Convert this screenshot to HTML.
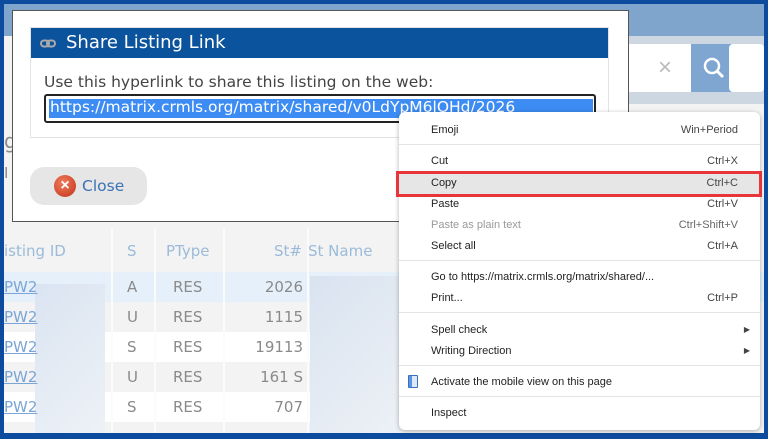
<!DOCTYPE html>
<html><head><style>
*{margin:0;padding:0;box-sizing:border-box}
body{width:768px;height:439px;overflow:hidden;position:relative;background:#0c4b9d;font-family:"Liberation Sans",sans-serif}
.a{position:absolute}
#page{left:4px;top:4px;width:760px;height:429px;background:#f3f3f3;overflow:hidden}
.t{font-size:15px;color:#8a8a8a;font-family:"DejaVu Sans",sans-serif}
.cm{font-family:"Liberation Sans",sans-serif;font-size:11px;color:#222}
.it{position:absolute;left:32px;right:22px;height:20px;line-height:20px}
.it span{position:absolute;right:0;color:#444}
.sep{position:absolute;left:0;right:0;height:1px;background:#e3e3e3}
.dj{font-family:"DejaVu Sans",sans-serif}
</style></head><body>
<div id="page" class="a">
 <div class="a" style="left:0;top:0;width:760px;height:32px;background:#7fa5cc"></div>
 <div class="a" style="left:620px;top:32px;width:140px;height:68px;background:#ccd7e2"></div>
 <div class="a" style="left:620px;top:40px;width:67px;height:48px;background:#fff"></div>
 <div class="a" style="left:654px;top:50px;font-size:24px;color:#bbb">×</div>
 <div class="a" style="left:687px;top:40px;width:47px;height:48px;background:#7ea6d0"></div>
 <svg class="a" style="left:698px;top:52px" width="24" height="24"><circle cx="10" cy="10" r="7" stroke="#fff" stroke-width="2.5" fill="none"/><line x1="15" y1="15" x2="21" y2="21" stroke="#fff" stroke-width="3"/></svg>
 <div class="a" style="left:725px;top:40px;width:35px;height:48px;background:#fff;border-radius:4px"></div>
 <div class="a" style="left:0;top:224px;width:760px;height:44px;background:#f3f3f3"></div>
 <div class="a t" style="left:0;top:238px;color:#9bbbd9">isting ID</div>
 <div class="a t" style="left:123px;top:238px;color:#9bbbd9">S</div>
 <div class="a t" style="left:162px;top:238px;color:#9bbbd9">PType</div>
 <div class="a t" style="left:270px;top:238px;color:#9bbbd9">St#</div>
 <div class="a t" style="left:304px;top:238px;color:#9bbbd9">St Name</div>
 <div class="a" style="left:0;top:268px;width:760px;height:30px;background:#e6f0fb"></div>
 <div class="a" style="left:0;top:328px;width:310px;height:30px;background:#fff"></div>
 <div class="a" style="left:0;top:388px;width:310px;height:30px;background:#fff"></div>
 <div class="a" style="left:107px;top:224px;width:2px;height:210px;background:#fbfbfb"></div>
 <div class="a" style="left:150px;top:224px;width:2px;height:210px;background:#fbfbfb"></div>
 <div class="a" style="left:219px;top:224px;width:2px;height:210px;background:#fbfbfb"></div>
 <div class="a" style="left:303px;top:224px;width:2px;height:210px;background:#fbfbfb"></div>
 <div class="a" style="left:31px;top:280px;width:70px;height:155px;background:linear-gradient(135deg,#dae4f1,#eef2f7)"></div>
 <div class="a" style="left:306px;top:272px;width:90px;height:160px;background:linear-gradient(135deg,#d9e3f0,#edf1f6)"></div>
 <div class="a t" style="left:0;top:274px;color:#7aa5d6;text-decoration:underline">PW2</div>
 <div class="a t" style="left:0;top:304px;color:#7aa5d6;text-decoration:underline">PW2</div>
 <div class="a t" style="left:0;top:334px;color:#7aa5d6;text-decoration:underline">PW2</div>
 <div class="a t" style="left:0;top:364px;color:#7aa5d6;text-decoration:underline">PW2</div>
 <div class="a t" style="left:0;top:394px;color:#7aa5d6;text-decoration:underline">PW2</div>
 <div class="a t" style="left:123px;top:274px">A</div><div class="a t" style="left:123px;top:304px">U</div><div class="a t" style="left:123px;top:334px">S</div><div class="a t" style="left:123px;top:364px">U</div><div class="a t" style="left:123px;top:394px">S</div>
 <div class="a t" style="left:169px;top:274px">RES</div><div class="a t" style="left:169px;top:304px">RES</div><div class="a t" style="left:169px;top:334px">RES</div><div class="a t" style="left:169px;top:364px">RES</div><div class="a t" style="left:169px;top:394px">RES</div>
 <div class="a t" style="left:200px;width:99px;text-align:right;top:274px">2026</div>
 <div class="a t" style="left:200px;width:99px;text-align:right;top:304px">1115</div>
 <div class="a t" style="left:200px;width:99px;text-align:right;top:334px">19113</div>
 <div class="a t" style="left:200px;width:99px;text-align:right;top:364px">161 S</div>
 <div class="a t" style="left:200px;width:99px;text-align:right;top:394px">707</div>
 <div class="a t" style="left:0;top:125px;font-size:20px">g</div>
 <div class="a t" style="left:0;top:160px">I</div>
</div>
<!-- dialog -->
<div class="a" style="left:12px;top:10px;width:617px;height:212px;background:#fff;border:1px solid #555"></div>
<div class="a" style="left:30px;top:27px;width:579px;height:111px;border:1px solid #e3e3e3"></div>
<div class="a" style="left:31px;top:28px;width:577px;height:30px;background:#0b539c"></div>
<svg class="a" style="left:40px;top:39px" width="16" height="9"><rect x="1" y="1.5" width="8" height="6" rx="3" fill="none" stroke="#aaa" stroke-width="2"/><rect x="7" y="1.5" width="8" height="6" rx="3" fill="none" stroke="#aaa" stroke-width="2"/></svg>
<div class="a dj" style="left:66px;top:32px;font-size:18px;color:#fff">Share Listing Link</div>
<div class="a dj" style="left:44px;top:73px;font-size:15.5px;color:#444">Use this hyperlink to share this listing on the web:</div>
<div class="a" style="left:44px;top:94px;width:552px;height:29px;border:2px solid #222;border-radius:3px;overflow:hidden">
 <div class="a" style="left:3px;top:3px;width:544px;height:19px;background:#3d8cf3"></div>
 <div class="a dj" style="left:4px;top:2px;font-size:15.5px;color:#fff;white-space:nowrap">https://matrix.crmls.org/matrix/shared/v0LdYpM6lOHd/2026</div>
</div>
<div class="a" style="left:30px;top:167px;width:117px;height:38px;background:#e6e6e6;border-radius:14px"></div>
<div class="a" style="left:54px;top:175px;width:22px;height:22px;border-radius:50%;background:radial-gradient(circle at 40% 35%,#f07a5a,#c0341a);color:#fff;font-size:16px;font-weight:bold;text-align:center;line-height:22px">×</div>
<div class="a dj" style="left:82px;top:177px;font-size:15.5px;color:#3a72b5">Close</div>
<!-- context menu -->
<div class="a cm" style="left:399px;top:112px;width:361px;height:318px;background:#fff;border-radius:6px;box-shadow:0 1px 5px rgba(0,0,0,.3)">
 <div class="it" style="top:8px">Emoji<span>Win+Period</span></div>
 <div class="sep" style="top:32px"></div>
 <div class="it" style="top:39px">Cut<span>Ctrl+X</span></div>
 <div class="a" style="left:0;top:61px;width:361px;height:22px;background:#e6e6e6"></div>
 <div class="it" style="top:61px">Copy<span>Ctrl+C</span></div>
 <div class="it" style="top:82px">Paste<span>Ctrl+V</span></div>
 <div class="it" style="top:103px;color:#999">Paste as plain text<span style="color:#666">Ctrl+Shift+V</span></div>
 <div class="it" style="top:124px">Select all<span>Ctrl+A</span></div>
 <div class="sep" style="top:148px"></div>
 <div class="it" style="top:155px">Go to https://matrix.crmls.org/matrix/shared/...</div>
 <div class="it" style="top:176px">Print...<span>Ctrl+P</span></div>
 <div class="sep" style="top:200px"></div>
 <div class="it" style="top:208px">Spell check<span style="right:-12px;font-size:8px">▶</span></div>
 <div class="it" style="top:229px">Writing Direction<span style="right:-12px;font-size:8px">▶</span></div>
 <div class="sep" style="top:253px"></div>
 <div class="a" style="left:9px;top:263px;width:10px;height:13px;border:1px solid #3b6fc1;background:linear-gradient(90deg,#5a95e0 40%,#dbe8f8 40%);border-radius:1px"></div>
 <div class="it" style="top:260px">Activate the mobile view on this page</div>
 <div class="sep" style="top:284px"></div>
 <div class="it" style="top:291px">Inspect</div>
</div>
<div class="a" style="left:396px;top:171px;width:366px;height:26px;border:3px solid #e8353b"></div>
</body></html>
